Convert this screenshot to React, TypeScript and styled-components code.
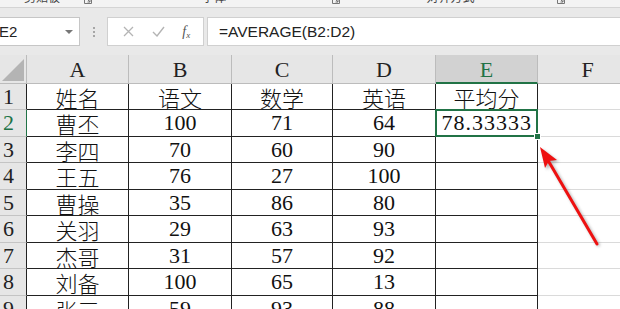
import styled, { createGlobalStyle } from "styled-components";

const GlobalStyle = createGlobalStyle`
  html, body {
    margin: 0;
    padding: 0;
    background: #ffffff;
    overflow: hidden;
  }
  body {
    width: 620px;
    height: 309px;
    font-family: "Liberation Sans", "Noto Sans CJK SC", sans-serif;
  }
`;

const green = "#217346";

const Page = styled.div`
  position: relative;
  width: 620px;
  height: 309px;
  overflow: hidden;
`;

const Ribbon = styled.div`
  display: flex;
  align-items: flex-end;
  height: 7px;
  background: #f3f3f3;
  border-bottom: 1px solid #d4d4d4;
  overflow: hidden;
`;

const RibbonGroup = styled.div<{ $width: number }>`
  display: flex;
  align-items: flex-end;
  width: ${(p) => p.$width}px;
  flex: none;
`;

const GroupLabel = styled.div`
  flex: 1;
  text-align: center;
  font-size: 12px;
  line-height: 14px;
  margin-bottom: 3px;
  color: #444;
  font-family: "Noto Sans CJK SC", sans-serif;
`;

const Launcher = styled.svg`
  width: 8px;
  height: 8px;
  margin: 0 4px 3px 0;
  flex: none;
`;

const FormulaArea = styled.div`
  display: flex;
  align-items: flex-start;
  height: 47px;
  padding-top: 9px;
  box-sizing: border-box;
  background: #e9e9e9;
`;

const NameBox = styled.div`
  display: flex;
  align-items: center;
  justify-content: space-between;
  width: 85px;
  height: 29px;
  margin-left: -5px;
  padding: 0 6px 0 3px;
  box-sizing: border-box;
  background: #fff;
  border: 1px solid #c6c6c6;
  font-size: 15px;
  color: #222;
`;

const Caret = styled.span`
  width: 0;
  height: 0;
  border-left: 4px solid transparent;
  border-right: 4px solid transparent;
  border-top: 4px solid #777;
`;

const Grip = styled.div`
  display: flex;
  flex-direction: column;
  gap: 2px;
  margin: 10px 12px 0 13px;
`;

const GripDot = styled.span`
  width: 2px;
  height: 2px;
  background: #a6a6a6;
`;

const ButtonBox = styled.div`
  display: flex;
  align-items: center;
  justify-content: space-around;
  width: 97px;
  height: 29px;
  padding: 0 4px 0 6px;
  box-sizing: border-box;
  background: #fff;
  border: 1px solid #d0d0d0;
  color: #b0b0b0;
`;

const FxLabel = styled.span`
  font-family: "Liberation Serif", serif;
  font-style: italic;
  font-size: 14px;
  color: #555;
`;

const FxSub = styled.span`
  font-size: 9px;
  vertical-align: -2px;
`;

const FormulaInput = styled.div`
  display: flex;
  align-items: center;
  flex: 1;
  height: 29px;
  margin-left: 3px;
  padding-left: 11px;
  box-sizing: border-box;
  background: #fff;
  border: 1px solid #d0d0d0;
  border-right: none;
  font-size: 15.5px;
  color: #222;
`;

const Sheet = styled.div`
  display: grid;
  grid-template-columns: 27px 102px 103px 101px 103px 102px 100px;
  grid-template-rows: 29px 26px 27px 26px 27px 26px 27px 26px 27px 26px;
  font-family: "Liberation Serif", "Noto Sans CJK SC", serif;
  font-size: 22px;
  font-weight: 300;
  color: #111;
`;

const Corner = styled.div`
  position: relative;
  background: #e6e6e6;
  border-right: 1px solid #bcbcbc;
  border-bottom: 1px solid #bcbcbc;
  overflow: hidden;

  &::after {
    content: "";
    position: absolute;
    right: 2px;
    bottom: 2px;
    width: 0;
    height: 0;
    border-left: 22px solid transparent;
    border-bottom: 22px solid #b4b4b4;
  }
`;

const ColHead = styled.div<{ $active?: boolean }>`
  display: flex;
  align-items: center;
  justify-content: center;
  padding-top: 2px;
  box-sizing: border-box;
  background: ${(p) => (p.$active ? "#d2d2d2" : "#e6e6e6")};
  color: ${(p) => (p.$active ? green : "#222")};
  border-right: 1px solid #bcbcbc;
  border-bottom: ${(p) => (p.$active ? `2px solid ${green}` : "1px solid #bcbcbc")};
`;

const RowHead = styled.div<{ $active?: boolean }>`
  display: flex;
  align-items: center;
  padding-left: 3px;
  box-sizing: border-box;
  background: #e6e6e6;
  color: ${(p) => (p.$active ? green : "#222")};
  border-right: 1px solid ${(p) => (p.$active ? green : "#222")};
  border-bottom: 1px solid #c4c4c4;
`;

const Cell = styled.div<{ $align?: "center" | "right" }>`
  position: relative;
  display: flex;
  align-items: center;
  justify-content: ${(p) => (p.$align === "right" ? "flex-end" : "center")};
  padding-right: ${(p) => (p.$align === "right" ? "5px" : "0")};
  letter-spacing: ${(p) => (p.$align === "right" ? "1px" : "normal")};
  box-sizing: border-box;
  background: #fff;
  border-right: 1px solid #222;
  border-bottom: 1px solid #222;
  white-space: nowrap;
`;

const ActiveCell = styled(Cell)`
  &::after {
    content: "";
    position: absolute;
    left: -1px;
    top: -1px;
    right: -1px;
    bottom: -1px;
    border: 2px solid ${green};
  }
`;

const FillHandle = styled.span`
  position: absolute;
  right: -4px;
  bottom: -4px;
  width: 5px;
  height: 5px;
  background: ${green};
  border: 1px solid #fff;
  z-index: 2;
`;

const EmptyCell = styled.div`
  background: #fff;
  border-bottom: 1px solid #dadada;
`;

const ArrowLayer = styled.svg`
  position: absolute;
  left: 0;
  top: 0;
  width: 620px;
  height: 309px;
  pointer-events: none;
`;

const columns = ["A", "B", "C", "D", "E", "F"];

const rows: string[][] = [
  ["姓名", "语文", "数学", "英语", "平均分"],
  ["曹丕", "100", "71", "64", "78.33333"],
  ["李四", "70", "60", "90", ""],
  ["王五", "76", "27", "100", ""],
  ["曹操", "35", "86", "80", ""],
  ["关羽", "29", "63", "93", ""],
  ["杰哥", "31", "57", "92", ""],
  ["刘备", "100", "65", "13", ""],
  ["张三", "59", "93", "88", ""],
];

const LauncherIcon = () => (
  <Launcher viewBox="0 0 8 8">
    <path d="M0.5 0.5h7v7h-7z" fill="none" stroke="#777" />
    <path d="M3 3l3 3M6 3.5V6H3.5" fill="none" stroke="#777" />
  </Launcher>
);

const App = () => {
  return (
    <Page>
      <GlobalStyle />
      <Ribbon>
        <RibbonGroup $width={96}>
          <GroupLabel>剪贴板</GroupLabel>
          <LauncherIcon />
        </RibbonGroup>
        <RibbonGroup $width={248}>
          <GroupLabel>字体</GroupLabel>
          <LauncherIcon />
        </RibbonGroup>
        <RibbonGroup $width={225}>
          <GroupLabel>对齐方式</GroupLabel>
          <LauncherIcon />
        </RibbonGroup>
      </Ribbon>

      <FormulaArea>
        <NameBox>
          <span>E2</span>
          <Caret />
        </NameBox>
        <Grip>
          <GripDot />
          <GripDot />
          <GripDot />
        </Grip>
        <ButtonBox>
          <svg width="11" height="11" viewBox="0 0 11 11">
            <path d="M1 1l9 9M10 1l-9 9" stroke="#b4b4b4" strokeWidth="1.3" />
          </svg>
          <svg width="13" height="11" viewBox="0 0 13 11">
            <path d="M1 6l4 4 7-9" fill="none" stroke="#b4b4b4" strokeWidth="1.4" />
          </svg>
          <FxLabel>
            f<FxSub>x</FxSub>
          </FxLabel>
        </ButtonBox>
        <FormulaInput>=AVERAGE(B2:D2)</FormulaInput>
      </FormulaArea>

      <Sheet>
        <Corner />
        {columns.map((c) => (
          <ColHead key={c} $active={c === "E"}>
            {c}
          </ColHead>
        ))}
        {rows.map((row, r) => (
          <>
            <RowHead key={`h${r}`} $active={r === 1}>
              {r + 1}
            </RowHead>
            {row.map((value, c) =>
              r === 1 && c === 4 ? (
                <ActiveCell key={`${r}-${c}`} $align="right">
                  {value}
                  <FillHandle />
                </ActiveCell>
              ) : (
                <Cell key={`${r}-${c}`}>{value}</Cell>
              )
            )}
            <EmptyCell key={`f${r}`} />
          </>
        ))}
      </Sheet>

      <ArrowLayer viewBox="0 0 620 309">
        <defs>
          <filter id="shadow" x="-20%" y="-20%" width="140%" height="140%">
            <feGaussianBlur stdDeviation="1.5" />
          </filter>
        </defs>
        <g transform="translate(2 2)" opacity="0.45" filter="url(#shadow)">
          <line x1="597" y1="244" x2="549" y2="162" stroke="#555" strokeWidth="3" />
          <polygon points="540,147 557,160 549,161 545,168" fill="#555" />
        </g>
        <line x1="597" y1="244" x2="549" y2="162" stroke="#ee1111" strokeWidth="3" strokeLinecap="round" />
        <polygon points="540,147 557,160 549,161 545,168" fill="#ee1111" />
      </ArrowLayer>
    </Page>
  );
};

export default App;
